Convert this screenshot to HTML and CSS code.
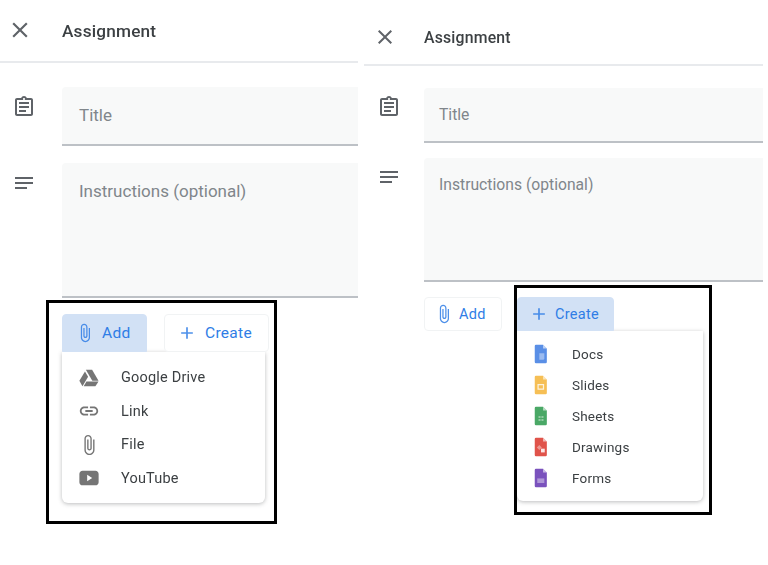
FILE: index.html
```html
<!DOCTYPE html>
<html lang="en">
<head>
<meta charset="utf-8">
<title>Assignment</title>
<link rel="stylesheet" href="styles.css">
</head>
<body>
<svg class="defs" width="0" height="0" aria-hidden="true">
  <symbol id="i-close" viewBox="0 0 24 24"><path d="M19 6.41L17.59 5 12 10.59 6.41 5 5 6.41 10.59 12 5 17.59 6.41 19 12 13.41 17.59 19 19 17.59 13.41 12z"/></symbol>
  <symbol id="i-assign" viewBox="0 0 24 24"><path d="M19 3h-4.18C14.4 1.84 13.3 1 12 1s-2.4.84-2.82 2H5c-1.1 0-2 .9-2 2v14c0 1.1.9 2 2 2h14c1.1 0 2-.9 2-2V5c0-1.1-.9-2-2-2zm-7 0c.55 0 1 .45 1 1s-.45 1-1 1-1-.45-1-1 .45-1 1-1zm7 16H5V5h14v14zM7 15h7v2H7zm0-4h10v2H7zm0-4h10v2H7z"/></symbol>
  <symbol id="i-notes" viewBox="0 0 24 24"><path d="M3 18h12v-2H3v2zM3 6v2h18V6H3zm0 7h18v-2H3v2z"/></symbol>
  <symbol id="i-attach" viewBox="0 0 24 24"><path d="M16.5 6v11.5c0 2.21-1.79 4-4 4s-4-1.79-4-4V5c0-1.38 1.12-2.5 2.5-2.5s2.5 1.12 2.5 2.5v10.5c0 .55-.45 1-1 1s-1-.45-1-1V6H10v9.5c0 1.38 1.12 2.5 2.5 2.5s2.5-1.12 2.5-2.5V5c0-2.21-1.79-4-4-4S7 2.79 7 5v12.5c0 3.04 2.46 5.5 5.5 5.5s5.5-2.46 5.5-5.5V6h-1.5z"/></symbol>
  <symbol id="i-plus" viewBox="0 0 24 24"><path d="M19 13h-6v6h-2v-6H5v-2h6V5h2v6h6v2z"/></symbol>
  <symbol id="i-link" viewBox="0 0 24 24"><path d="M3.9 12c0-1.71 1.39-3.1 3.1-3.1h4V7H7c-2.76 0-5 2.24-5 5s2.24 5 5 5h4v-1.9H7c-1.71 0-3.1-1.39-3.1-3.1zM8 13h8v-2H8v2zm9-6h-4v1.9h4c1.71 0 3.1 1.39 3.1 3.1s-1.39 3.1-3.1 3.1h-4V17h4c2.76 0 5-2.24 5-5s-2.24-5-5-5z"/></symbol>
  <symbol id="i-drive" viewBox="0 0 24 24"><path d="M8.6 3h6.8l7 12h-6.800z"/><path d="M7.600 4.800L11 10.600 4.900 21 1.500 15.100z"/><path d="M9.200 15.800h13.200L19 21H6.200z"/></symbol>
  <symbol id="i-youtube" viewBox="0 0 24 24"><path fill-rule="evenodd" d="M5 4h14c2 0 3.500 1.500 3.500 3.500v9c0 2-1.500 3.500-3.500 3.500H5c-2 0-3.500-1.500-3.500-3.500v-9C1.500 5.500 3 4 5 4zm5 4.500v7l5.500-3.500z"/></symbol>
  <symbol id="i-doc" viewBox="0 0 16 24"><path d="M2 1h8.500L15 5.500V21.500a1.500 1.500 0 0 1-1.500 1.500H2A1.500 1.500 0 0 1 .5 21.500V2.500A1.500 1.500 0 0 1 2 1z"/><path class="fold" d="M10.500 1L15 5.500H10.500z"/></symbol>
  <symbol id="i-in-docs" viewBox="0 0 16 24"><path class="in-soft" d="M6 11h6v6.500a1.500 1.500 0 0 1-1.500 1.500H6z"/></symbol>
  <symbol id="i-in-slides" viewBox="0 0 16 24"><path class="in-line" d="M4.500 11.500h6.500v5.500H4.500z"/></symbol>
  <symbol id="i-in-sheets" viewBox="0 0 16 24"><path class="in-soft" d="M5 12h2.500v2.500H5zm3.500 0H11v2.500H8.500zM5 15.500h2.500V18H5zm3.500 0H11V18H8.500z"/></symbol>
  <symbol id="i-in-drawings" viewBox="0 0 16 24"><path class="in-soft" d="M6 9.500l3 3-3 3-3-3z"/><path class="in-solid" d="M8 14h4.500v4.500H8z"/></symbol>
  <symbol id="i-in-forms" viewBox="0 0 16 24"><path class="in-soft" d="M3.500 12.500h8.500V18H3.500z"/></symbol>
</svg>

<main class="page">
  <section class="panel panel-a">
    <header class="head">
      <svg class="ic close"><use href="#i-close"/></svg>
      <h1 class="title">Assignment</h1>
    </header>
    <div class="row row-title">
      <svg class="ic lead"><use href="#i-assign"/></svg>
      <div class="field field-title">Title</div>
    </div>
    <div class="row row-body">
      <svg class="ic lead"><use href="#i-notes"/></svg>
      <div class="field field-body">Instructions (optional)</div>
    </div>
    <div class="actions">
      <button class="btn btn-add on"><svg class="ic-btn"><use href="#i-attach"/></svg>Add</button>
      <button class="btn btn-create"><svg class="ic-btn"><use href="#i-plus"/></svg>Create</button>
      <div class="mark"></div>
    </div>
    <ul class="menu">
      <li class="item"><svg class="ic-item"><use href="#i-drive"/></svg>Google Drive</li>
      <li class="item"><svg class="ic-item"><use href="#i-link"/></svg>Link</li>
      <li class="item"><svg class="ic-item"><use href="#i-attach"/></svg>File</li>
      <li class="item"><svg class="ic-item"><use href="#i-youtube"/></svg>YouTube</li>
    </ul>
  </section>

  <section class="panel panel-b">
    <header class="head">
      <svg class="ic close"><use href="#i-close"/></svg>
      <h1 class="title">Assignment</h1>
    </header>
    <div class="row row-title">
      <svg class="ic lead"><use href="#i-assign"/></svg>
      <div class="field field-title">Title</div>
    </div>
    <div class="row row-body">
      <svg class="ic lead"><use href="#i-notes"/></svg>
      <div class="field field-body">Instructions (optional)</div>
    </div>
    <div class="actions">
      <button class="btn btn-add"><svg class="ic-btn"><use href="#i-attach"/></svg>Add</button>
      <button class="btn btn-create on"><svg class="ic-btn"><use href="#i-plus"/></svg>Create</button>
      <div class="mark"></div>
    </div>
    <ul class="menu">
      <li class="item"><svg class="ic-item doc c-docs"><use href="#i-doc"/><use href="#i-in-docs"/></svg>Docs</li>
      <li class="item"><svg class="ic-item doc c-slides"><use href="#i-doc"/><use href="#i-in-slides"/></svg>Slides</li>
      <li class="item"><svg class="ic-item doc c-sheets"><use href="#i-doc"/><use href="#i-in-sheets"/></svg>Sheets</li>
      <li class="item"><svg class="ic-item doc c-drawings"><use href="#i-doc"/><use href="#i-in-drawings"/></svg>Drawings</li>
      <li class="item"><svg class="ic-item doc c-forms"><use href="#i-doc"/><use href="#i-in-forms"/></svg>Forms</li>
    </ul>
  </section>
</main>
</body>
</html>
```

FILE: styles.css
```css
* { box-sizing: border-box; }
html, body { margin: 0; padding: 0; background: #fff; }
body { width: 768px; height: 565px; overflow: hidden; font-family: Roboto, "Liberation Sans", sans-serif; }
.defs { position: absolute; }
.page { display: flex; align-items: flex-start; }

.panel { position: relative; flex: none; filter: blur(.5px); }
.panel-a { width: 358px; }
.panel-b { width: 399px; margin-left: 6px; padding-top: 9px; }

.head { display: flex; align-items: center; border-bottom: 2px solid #e8eaed; }
.panel-a .head { height: 63px; }
.panel-b .head { height: 57px; }
.title { margin: 0; font-weight: 500; color: #3c4043; letter-spacing: .2px; }
.panel-a .title { font-size: 17.200px; margin-left: 29px; }
.panel-b .title { font-size: 15.800px; margin-left: 27px; padding-top: 2px; }

.ic { flex: none; fill: #5f6368; }
.close { width: 26px; height: 26px; }
.panel-a .close { margin-left: 7px; margin-top: -1px; }
.panel-b .close { margin-left: 9px; margin-top: 1px; width: 24px; height: 24px; }

.row { display: flex; align-items: flex-start; }
.panel-a .row-title { margin-top: 24px; }
.panel-a .row-body { margin-top: 17px; }
.panel-b .row-title { margin-top: 22px; }
.panel-b .row-body { margin-top: 15px; }
.lead { width: 24px; height: 24px; }
.panel-a .lead { margin: 8px 26px 0 12px; }
.panel-b .lead { margin: 7px 23px 0 13px; }

.field { flex: 1; background: #f8f9f9; color: #80868b; border-bottom: 2px solid #bdc1c6; border-radius: 4px 0 0 0; }
.panel-a .field { padding-left: 17px; font-size: 17px; }
.panel-b .field { padding-left: 15px; font-size: 15.700px; }
.panel-a .field-title { height: 59px; line-height: 57px; }
.panel-a .field-body { height: 135px; padding-top: 18px; line-height: 20px; }
.panel-b .field-title { height: 55px; line-height: 53px; }
.panel-b .field-body { height: 124px; padding-top: 17px; line-height: 20px; }

.actions { position: relative; display: flex; }
.panel-a .actions { margin: 16px 0 0 62px; gap: 17px; height: 38px; }
.panel-b .actions { margin: 15px 0 0 60px; gap: 15px; height: 34px; }

.btn { display: flex; align-items: center; height: 100%; padding: 0; background: #fff; color: #2f7de6; border: 1px solid #f1f3f4; border-radius: 4px; font-family: inherit; font-weight: 400; letter-spacing: .3px; }
.btn.on { background: #d2e1f5; border-color: #d2e1f5; border-radius: 4px 4px 0 0; }
.panel-a .btn { font-size: 15.500px; }
.panel-b .btn { font-size: 14.500px; }
.panel-a .btn-add { width: 85px; padding-left: 12px; gap: 7px; }
.panel-a .btn-create { width: 105px; padding-left: 12px; gap: 8px; }
.panel-b .btn-add { width: 78px; padding-left: 9px; gap: 5px; }
.panel-b .btn-create { width: 97px; padding-left: 11px; gap: 6px; }
.ic-btn { flex: none; width: 20px; height: 20px; fill: #2f7de6; opacity: .85; }

.mark { position: absolute; border: 3px solid #000; pointer-events: none; }
.panel-a .mark { left: -16px; top: -14px; width: 231px; height: 224px; }
.panel-b .mark { left: 90px; top: -12px; width: 198px; height: 230px; }

.menu { list-style: none; margin: 0; padding: 0; display: flex; flex-direction: column; justify-content: center; background: #fff; border-radius: 0 0 6px 6px; box-shadow: 0 1px 4px rgba(60,64,67,.35); color: #3c4043; }
.panel-a .menu { margin-left: 62px; width: 203px; height: 151px; padding-top: 1px; }
.panel-b .menu { margin-left: 153px; width: 186px; height: 170px; }
.item { display: flex; align-items: center; letter-spacing: .2px; }
.panel-a .item { height: 33.500px; font-size: 14.500px; padding-left: 16px; }
.panel-b .item { height: 31px; font-size: 13.500px; padding-left: 16px; }

.ic-item { flex: none; width: 22px; height: 22px; fill: #757575; }
.panel-a .ic-item { margin-right: 21px; }
.panel-b .ic-item { width: 16px; height: 20px; margin-right: 23px; }
.c-docs { fill: #5a8fe6; }
.c-slides { fill: #f6bf55; }
.c-sheets { fill: #4aa866; }
.c-drawings { fill: #e0534a; }
.c-forms { fill: #7a52bd; }
.fold { opacity: .6; fill: #fff; }
.in-soft { fill: #fff; opacity: .4; }
.in-solid { fill: #fff; opacity: .85; }
.in-line { fill: none; stroke: #fff; stroke-width: 1.500; opacity: .8; }
```
